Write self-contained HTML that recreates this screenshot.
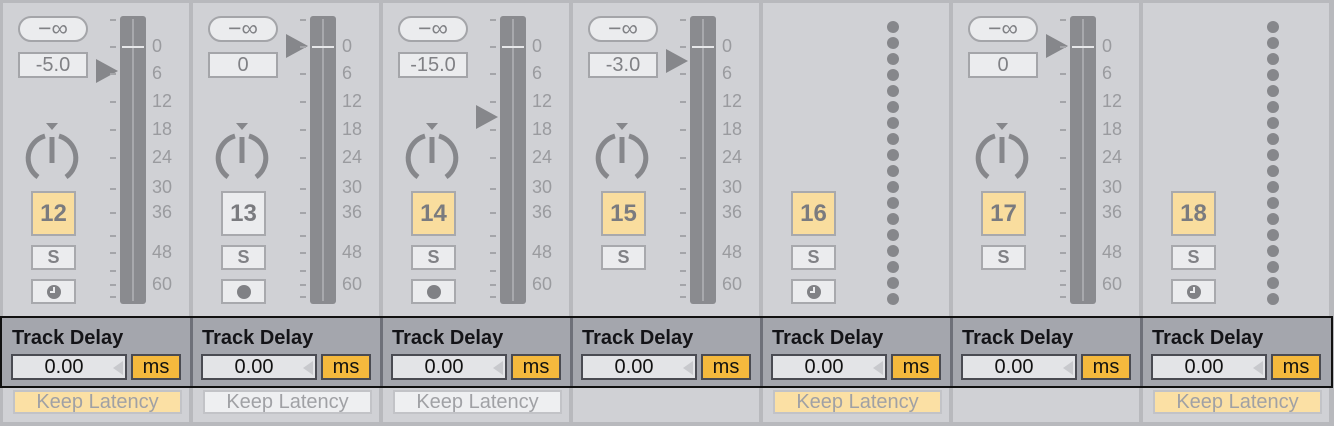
<!DOCTYPE html>
<html><head><meta charset="utf-8"><style>
*{margin:0;padding:0;box-sizing:border-box}
body{width:1334px;height:426px;background:#b8b9bd;position:relative;overflow:hidden;font-family:"Liberation Sans","DejaVu Sans",sans-serif}
.col{position:absolute;top:3px;width:186px;height:419px;background:#d0d1d5}
.col>*{position:absolute}
.pill{left:15px;top:13px;width:70px;height:26px;border:2px solid #a4a5a9;border-radius:13px;background:#ebecee;color:#808185;font-size:23px;text-align:center;line-height:20px}
.val{left:15px;top:49px;width:70px;height:26px;border:2px solid #a4a5a9;background:#ebecee;color:#808185;font-size:20px;text-align:center;line-height:22px}
.tri{left:93px;width:0;height:0;border-top:12px solid transparent;border-bottom:12px solid transparent;border-left:22px solid #86878b}
.meter{left:117px;top:13px;width:26px;height:288px;background:#8a8b8f;border-radius:3px}
.meter:before{content:"";position:absolute;left:12px;top:3px;width:2px;height:282px;background:#a8a9ad}
.meter:after{content:"";position:absolute;left:2px;top:30px;width:22px;height:2px;background:#e6e7e9}
.tk{left:107px;width:6px;height:2px;background:#a4a5a9}
.lb{left:149px;color:#9a9b9f;font-size:18px;line-height:17px}
.num{left:28px;top:188px;width:45px;height:45px;border:2px solid #a8a9ad;background:#f9dd9e;color:#7a7b7f;font-size:24px;font-weight:bold;text-align:center;line-height:41px}
.num.w{background:#ebecee}
.sb{left:28px;width:45px;height:25px;border:2px solid #a8a9ad;background:#ebecee;color:#808185;font-size:18px;font-weight:bold;text-align:center;line-height:21px}
.kl{left:10px;top:387px;width:169px;height:24px;border:2px solid #c2c3c7;color:#a0a1a5;font-size:20px;text-align:center;line-height:20px;white-space:nowrap}
.kl.y{background:#fbe0a4}.kl.w{background:#eeeff1}
#panel{position:absolute;left:0;top:316px;width:1333px;height:72px;border:2px solid #111;background:#a4a6ad}
.pc{position:absolute;top:0;height:68px;width:190px}
.pc .t{position:absolute;left:10px;top:9px;font-size:20px;font-weight:bold;color:#141418;white-space:nowrap}
.pc .b{position:absolute;left:9px;top:36px;width:116px;height:26px;border:2px solid #4a4b52;background:#e3e4e7;font-size:20px;text-align:center;line-height:22px;color:#111;padding-right:10px}
.pc .b:after{content:"";position:absolute;right:2px;top:5px;border-top:7px solid transparent;border-bottom:7px solid transparent;border-right:10px solid #c8c9cd}
.pc .m{position:absolute;left:129px;top:36px;width:50px;height:26px;border:2px solid #4a4b52;background:#f5b93d;font-size:20px;text-align:center;line-height:22px;color:#111}
.sep{position:absolute;top:0;width:3px;height:68px;background:#6e7079}
</style></head><body>

<div class="col" style="left:3px">
<div class="pill">−∞</div><div class="val">-5.0</div><div class="tri" style="top:56px"></div>
<div class="meter"></div>
<div class="tk" style="top:16px"></div><div class="tk" style="top:43px"></div><div class="tk" style="top:70px"></div><div class="tk" style="top:98px"></div><div class="tk" style="top:126px"></div><div class="tk" style="top:154px"></div><div class="tk" style="top:185px"></div><div class="tk" style="top:209px"></div><div class="tk" style="top:232px"></div><div class="tk" style="top:249px"></div><div class="tk" style="top:267px"></div><div class="tk" style="top:281px"></div><div class="tk" style="top:293px"></div>
<div class="lb" style="top:35px">0</div><div class="lb" style="top:62px">6</div><div class="lb" style="top:90px">12</div><div class="lb" style="top:118px">18</div><div class="lb" style="top:146px">24</div><div class="lb" style="top:176px">30</div><div class="lb" style="top:201px">36</div><div class="lb" style="top:241px">48</div><div class="lb" style="top:273px">60</div>
<svg style="left:20px;top:118px" width="60" height="70"><path d="M23 2h12l-6 7z" fill="#86878b"/><path d="M22 15 A23 23 0 0 0 15 56 M36 15 A23 23 0 0 1 43 56" fill="none" stroke="#86878b" stroke-width="5"/><path d="M29 16v26" stroke="#86878b" stroke-width="5"/></svg>
<div class="num">12</div><div class="sb" style="top:242px">S</div>
<div class="sb" style="top:276px"><svg width="16" height="16" style="margin-top:3px"><circle cx="8" cy="8" r="7" fill="#808185"/><path d="M8 3v5h-4" stroke="#ebecee" stroke-width="2" fill="none"/></svg></div>
<div class="kl y">Keep Latency</div>
</div>

<div class="col" style="left:193px">
<div class="pill">−∞</div><div class="val">0</div><div class="tri" style="top:31px"></div>
<div class="meter"></div>
<div class="tk" style="top:16px"></div><div class="tk" style="top:43px"></div><div class="tk" style="top:70px"></div><div class="tk" style="top:98px"></div><div class="tk" style="top:126px"></div><div class="tk" style="top:154px"></div><div class="tk" style="top:185px"></div><div class="tk" style="top:209px"></div><div class="tk" style="top:232px"></div><div class="tk" style="top:249px"></div><div class="tk" style="top:267px"></div><div class="tk" style="top:281px"></div><div class="tk" style="top:293px"></div>
<div class="lb" style="top:35px">0</div><div class="lb" style="top:62px">6</div><div class="lb" style="top:90px">12</div><div class="lb" style="top:118px">18</div><div class="lb" style="top:146px">24</div><div class="lb" style="top:176px">30</div><div class="lb" style="top:201px">36</div><div class="lb" style="top:241px">48</div><div class="lb" style="top:273px">60</div>
<svg style="left:20px;top:118px" width="60" height="70"><path d="M23 2h12l-6 7z" fill="#86878b"/><path d="M22 15 A23 23 0 0 0 15 56 M36 15 A23 23 0 0 1 43 56" fill="none" stroke="#86878b" stroke-width="5"/><path d="M29 16v26" stroke="#86878b" stroke-width="5"/></svg>
<div class="num w">13</div><div class="sb" style="top:242px">S</div>
<div class="sb" style="top:276px"><svg width="16" height="16" style="margin-top:3px"><circle cx="8" cy="8" r="7" fill="#808185"/></svg></div>
<div class="kl w">Keep Latency</div>
</div>

<div class="col" style="left:383px">
<div class="pill">−∞</div><div class="val">-15.0</div><div class="tri" style="top:102px"></div>
<div class="meter"></div>
<div class="tk" style="top:16px"></div><div class="tk" style="top:43px"></div><div class="tk" style="top:70px"></div><div class="tk" style="top:98px"></div><div class="tk" style="top:126px"></div><div class="tk" style="top:154px"></div><div class="tk" style="top:185px"></div><div class="tk" style="top:209px"></div><div class="tk" style="top:232px"></div><div class="tk" style="top:249px"></div><div class="tk" style="top:267px"></div><div class="tk" style="top:281px"></div><div class="tk" style="top:293px"></div>
<div class="lb" style="top:35px">0</div><div class="lb" style="top:62px">6</div><div class="lb" style="top:90px">12</div><div class="lb" style="top:118px">18</div><div class="lb" style="top:146px">24</div><div class="lb" style="top:176px">30</div><div class="lb" style="top:201px">36</div><div class="lb" style="top:241px">48</div><div class="lb" style="top:273px">60</div>
<svg style="left:20px;top:118px" width="60" height="70"><path d="M23 2h12l-6 7z" fill="#86878b"/><path d="M22 15 A23 23 0 0 0 15 56 M36 15 A23 23 0 0 1 43 56" fill="none" stroke="#86878b" stroke-width="5"/><path d="M29 16v26" stroke="#86878b" stroke-width="5"/></svg>
<div class="num">14</div><div class="sb" style="top:242px">S</div>
<div class="sb" style="top:276px"><svg width="16" height="16" style="margin-top:3px"><circle cx="8" cy="8" r="7" fill="#808185"/></svg></div>
<div class="kl w">Keep Latency</div>
</div>

<div class="col" style="left:573px">
<div class="pill">−∞</div><div class="val">-3.0</div><div class="tri" style="top:46px"></div>
<div class="meter"></div>
<div class="tk" style="top:16px"></div><div class="tk" style="top:43px"></div><div class="tk" style="top:70px"></div><div class="tk" style="top:98px"></div><div class="tk" style="top:126px"></div><div class="tk" style="top:154px"></div><div class="tk" style="top:185px"></div><div class="tk" style="top:209px"></div><div class="tk" style="top:232px"></div><div class="tk" style="top:249px"></div><div class="tk" style="top:267px"></div><div class="tk" style="top:281px"></div><div class="tk" style="top:293px"></div>
<div class="lb" style="top:35px">0</div><div class="lb" style="top:62px">6</div><div class="lb" style="top:90px">12</div><div class="lb" style="top:118px">18</div><div class="lb" style="top:146px">24</div><div class="lb" style="top:176px">30</div><div class="lb" style="top:201px">36</div><div class="lb" style="top:241px">48</div><div class="lb" style="top:273px">60</div>
<svg style="left:20px;top:118px" width="60" height="70"><path d="M23 2h12l-6 7z" fill="#86878b"/><path d="M22 15 A23 23 0 0 0 15 56 M36 15 A23 23 0 0 1 43 56" fill="none" stroke="#86878b" stroke-width="5"/><path d="M29 16v26" stroke="#86878b" stroke-width="5"/></svg>
<div class="num">15</div><div class="sb" style="top:242px">S</div>
</div>

<div class="col" style="left:763px">
<svg style="left:123px;top:16px" width="14" height="290"><g fill="#86878b"><circle cx="7" cy="8" r="6"/><circle cx="7" cy="24" r="6"/><circle cx="7" cy="40" r="6"/><circle cx="7" cy="56" r="6"/><circle cx="7" cy="72" r="6"/><circle cx="7" cy="88" r="6"/><circle cx="7" cy="104" r="6"/><circle cx="7" cy="120" r="6"/><circle cx="7" cy="136" r="6"/><circle cx="7" cy="152" r="6"/><circle cx="7" cy="168" r="6"/><circle cx="7" cy="184" r="6"/><circle cx="7" cy="200" r="6"/><circle cx="7" cy="216" r="6"/><circle cx="7" cy="232" r="6"/><circle cx="7" cy="248" r="6"/><circle cx="7" cy="264" r="6"/><circle cx="7" cy="280" r="6"/></g></svg>
<div class="num">16</div><div class="sb" style="top:242px">S</div>
<div class="sb" style="top:276px"><svg width="16" height="16" style="margin-top:3px"><circle cx="8" cy="8" r="7" fill="#808185"/><path d="M8 3v5h-4" stroke="#ebecee" stroke-width="2" fill="none"/></svg></div>
<div class="kl y">Keep Latency</div>
</div>

<div class="col" style="left:953px">
<div class="pill">−∞</div><div class="val">0</div><div class="tri" style="top:31px"></div>
<div class="meter"></div>
<div class="tk" style="top:16px"></div><div class="tk" style="top:43px"></div><div class="tk" style="top:70px"></div><div class="tk" style="top:98px"></div><div class="tk" style="top:126px"></div><div class="tk" style="top:154px"></div><div class="tk" style="top:185px"></div><div class="tk" style="top:209px"></div><div class="tk" style="top:232px"></div><div class="tk" style="top:249px"></div><div class="tk" style="top:267px"></div><div class="tk" style="top:281px"></div><div class="tk" style="top:293px"></div>
<div class="lb" style="top:35px">0</div><div class="lb" style="top:62px">6</div><div class="lb" style="top:90px">12</div><div class="lb" style="top:118px">18</div><div class="lb" style="top:146px">24</div><div class="lb" style="top:176px">30</div><div class="lb" style="top:201px">36</div><div class="lb" style="top:241px">48</div><div class="lb" style="top:273px">60</div>
<svg style="left:20px;top:118px" width="60" height="70"><path d="M23 2h12l-6 7z" fill="#86878b"/><path d="M22 15 A23 23 0 0 0 15 56 M36 15 A23 23 0 0 1 43 56" fill="none" stroke="#86878b" stroke-width="5"/><path d="M29 16v26" stroke="#86878b" stroke-width="5"/></svg>
<div class="num">17</div><div class="sb" style="top:242px">S</div>
</div>

<div class="col" style="left:1143px">
<svg style="left:123px;top:16px" width="14" height="290"><g fill="#86878b"><circle cx="7" cy="8" r="6"/><circle cx="7" cy="24" r="6"/><circle cx="7" cy="40" r="6"/><circle cx="7" cy="56" r="6"/><circle cx="7" cy="72" r="6"/><circle cx="7" cy="88" r="6"/><circle cx="7" cy="104" r="6"/><circle cx="7" cy="120" r="6"/><circle cx="7" cy="136" r="6"/><circle cx="7" cy="152" r="6"/><circle cx="7" cy="168" r="6"/><circle cx="7" cy="184" r="6"/><circle cx="7" cy="200" r="6"/><circle cx="7" cy="216" r="6"/><circle cx="7" cy="232" r="6"/><circle cx="7" cy="248" r="6"/><circle cx="7" cy="264" r="6"/><circle cx="7" cy="280" r="6"/></g></svg>
<div class="num">18</div><div class="sb" style="top:242px">S</div>
<div class="sb" style="top:276px"><svg width="16" height="16" style="margin-top:3px"><circle cx="8" cy="8" r="7" fill="#808185"/><path d="M8 3v5h-4" stroke="#ebecee" stroke-width="2" fill="none"/></svg></div>
<div class="kl y">Keep Latency</div>
</div>

<div id="panel">
<div class="pc" style="left:0"><div class="t">Track Delay</div><div class="b">0.00</div><div class="m">ms</div></div>
<div class="sep" style="left:188px"></div>
<div class="pc" style="left:190px"><div class="t">Track Delay</div><div class="b">0.00</div><div class="m">ms</div></div>
<div class="sep" style="left:378px"></div>
<div class="pc" style="left:380px"><div class="t">Track Delay</div><div class="b">0.00</div><div class="m">ms</div></div>
<div class="sep" style="left:568px"></div>
<div class="pc" style="left:570px"><div class="t">Track Delay</div><div class="b">0.00</div><div class="m">ms</div></div>
<div class="sep" style="left:758px"></div>
<div class="pc" style="left:760px"><div class="t">Track Delay</div><div class="b">0.00</div><div class="m">ms</div></div>
<div class="sep" style="left:948px"></div>
<div class="pc" style="left:950px"><div class="t">Track Delay</div><div class="b">0.00</div><div class="m">ms</div></div>
<div class="sep" style="left:1138px"></div>
<div class="pc" style="left:1140px"><div class="t">Track Delay</div><div class="b">0.00</div><div class="m">ms</div></div>
</div>
</body></html>
